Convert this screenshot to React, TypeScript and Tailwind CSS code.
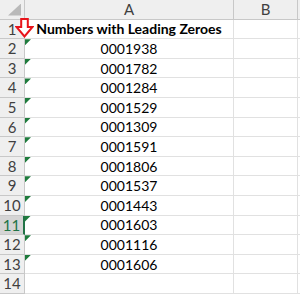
import React from "react";

// values in column A, rows 2-13
const values = [
  "0001938",
  "0001782",
  "0001284",
  "0001529",
  "0001309",
  "0001591",
  "0001806",
  "0001537",
  "0001443",
  "0001603",
  "0001116",
  "0001606",
];

const font = { fontFamily: "Lato, 'Liberation Sans', sans-serif" };

const rowHead =
  "flex items-center justify-center border-r border-b border-[#c8c8c8] bg-[#efefef] text-[15px] text-[#3f3f3f]";
const cell = "relative flex items-center justify-center border-r border-b border-[#e1e1e1] text-[14px] text-black";

// small green error marker in the cell corner
const Marker = () => (
  <span className="absolute left-0 top-0 h-[6px] w-[6px] bg-[#1e7b3c] [clip-path:polygon(0_0,100%_0,0_100%)]" />
);

export default function App() {
  const rows: { n: number; text: string; bold?: boolean; marker?: boolean }[] = [
    { n: 1, text: "Numbers with Leading Zeroes", bold: true },
    ...values.map((v, i) => ({ n: i + 2, text: v, marker: true })),
    { n: 14, text: "" },
  ];

  return (
    <div className="relative h-[295px] w-[300px] overflow-hidden bg-white" style={font}>
      <div className="grid grid-cols-[25px_209px_64px_2px] auto-rows-[19.6px]">
        {/* column headers */}
        <div className="relative h-[19.5px] border-r border-b border-[#c8c8c8] bg-[#efefef]">
          <span className="absolute bottom-[3px] right-[3px] h-[12px] w-[13px] bg-[#b9b9b9] [clip-path:polygon(100%_0,100%_100%,0_100%)]" />
        </div>
        <div className="flex h-[19.5px] items-center justify-center border-r border-b border-[#c8c8c8] bg-[#efefef] text-[15px] text-[#3f3f3f]">
          A
        </div>
        <div className="flex h-[19.5px] items-center justify-center border-r border-b border-[#c8c8c8] bg-[#efefef] text-[15px] text-[#3f3f3f]">
          B
        </div>
        <div className="h-[19.5px] border-b border-[#c8c8c8] bg-[#efefef]" />

        {rows.map((r) => (
          <React.Fragment key={r.n}>
            <div
              className={
                r.n === 11
                  ? "flex items-center justify-center border-r-2 border-b border-r-[#217346] border-b-[#c8c8c8] bg-[#d4d4d4] text-[15px] text-[#217346]"
                  : rowHead
              }
            >
              {r.n}
            </div>
            <div className={cell + (r.bold ? " font-bold text-[14.5px]" : "")}>
              {r.marker && <Marker />}
              {r.text}
            </div>
            <div className={cell} />
            <div className="border-b border-[#e1e1e1]" />
          </React.Fragment>
        ))}
      </div>

      {/* red hollow arrow pointing down */}
      <svg className="absolute left-[15px] top-[18px]" width="19" height="20" viewBox="0 0 19 20">
        <path
          d="M6.2 1 H12.8 V9 H17.5 L9.5 18.5 L1.5 9 H6.2 Z"
          fill="white"
          stroke="#e8141b"
          strokeWidth="2"
          strokeLinejoin="miter"
        />
      </svg>
    </div>
  );
}
